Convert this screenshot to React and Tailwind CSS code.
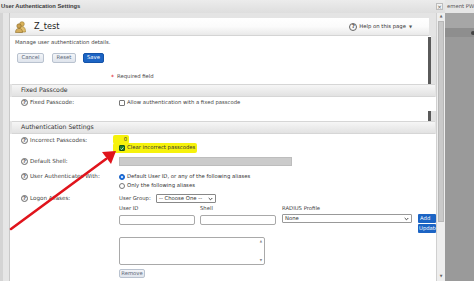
import React from "react";

const Help = () => (
  <span className="inline-flex items-center justify-center w-[7px] h-[7px] rounded-full border border-[#6b6b6b] bg-[#f4f4f4] text-[5px] font-bold text-[#555] leading-none shrink-0">?</span>
);

const Label = ({ children }) => (
  <div className="flex items-center gap-[2px] w-[98px] h-[9px] shrink-0">
    <Help />
    <span className="text-[5.6px] text-[#444] leading-none whitespace-nowrap">{children}</span>
  </div>
);

const SectionHeader = ({ children }) => (
  <div className="ml-[2px] w-[423px] h-[13px] flex items-center pl-[9px] bg-gradient-to-b from-[#f6f6f6] to-[#e2e2e2] border-y border-[#d6d6d6] shrink-0">
    <span className="text-[6.2px] text-[#333] leading-none">{children}</span>
  </div>
);

const GrayBtn = ({ children, w }) => (
  <div className={`${w} h-[10px] flex items-center justify-center rounded-[2px] border border-[#b9c2cf] bg-gradient-to-b from-[#f3f5f8] to-[#dfe4ec] text-[5.3px] text-[#5a6677] leading-none`}>
    {children}
  </div>
);

export default function App() {
  return (
    <div className="relative w-[474px] h-[281px] overflow-hidden flex bg-[#9b9b9b] font-['DejaVu_Sans',sans-serif]">
      {/* dialog */}
      <div className="w-[445px] flex flex-col shrink-0">
        {/* title bar */}
        <div className="h-[13px] bg-gradient-to-b from-[#ececec] to-[#dedede] flex items-center justify-between pl-[1px] pr-[2px] shrink-0">
          <span className="font-['Liberation_Sans',sans-serif] font-bold text-[5.8px] text-[#3a3a3a] leading-none">User Authentication Settings</span>
          <span className="w-[7px] h-[7px] border border-[#bdbdbd] bg-[#f3f3f3] flex items-center justify-center text-[6px] text-[#666] leading-none">×</span>
        </div>
        {/* body */}
        <div className="flex flex-1 min-h-0 bg-[#e4e4e4]">
          {/* left strip */}
          <div className="w-[10px] shrink-0 flex">
            <div className="w-[3px] bg-[#d4d4d4]" />
            <div className="w-[6px] bg-[#e6e6e6]" />
            <div className="w-[1px] bg-[#c9c9c9]" />
          </div>
          {/* content */}
          <div className="w-[426px] shrink-0 flex flex-col overflow-hidden pt-[5px]">
            {/* header panel */}
            <div className="w-[419px] h-[18px] shrink-0 flex items-center justify-between bg-gradient-to-b from-[#ffffff] via-[#fbfbfb] to-[#e9e9e9] border-b border-[#d4d4d4] pl-[5px] pr-[17px]">
              <div className="flex items-center gap-[8px]">
                <svg width="11" height="12" viewBox="0 0 11 12">
                  <circle cx="7" cy="3" r="2.3" fill="#d9b25a" stroke="#9c7a2c" strokeWidth="0.6" />
                  <path d="M3.5 11 C3.5 7 5 5.6 7 5.6 C9 5.6 10.5 7 10.5 11 Z" fill="#e2c070" stroke="#9c7a2c" strokeWidth="0.6" />
                  <circle cx="4" cy="5" r="2.2" fill="#caa050" stroke="#8a6a24" strokeWidth="0.6" />
                  <path d="M0.5 11.5 C0.5 8.5 2 7.4 4 7.4 C6 7.4 7.5 8.5 7.5 11.5 Z" fill="#d5ad5c" stroke="#8a6a24" strokeWidth="0.6" />
                </svg>
                <span className="text-[8.2px] text-[#222] leading-none">Z_test</span>
              </div>
              <div className="flex items-center gap-[1px]">
                <span className="inline-flex items-center justify-center w-[8px] h-[8px] rounded-full border border-[#666] text-[5.5px] font-bold text-[#555] leading-none">?</span>
                <span className="text-[5.3px] text-[#333] leading-none ml-[1px]">Help on this page</span>
                <span className="text-[4px] text-[#555] leading-none ml-[2px]">▼</span>
              </div>
            </div>
            {/* top block */}
            <div className="flex h-[48px] shrink-0 bg-white">
              <div className="w-[418px] flex flex-col">
                <div className="h-[8px] mt-[3px] pl-[5px] flex items-center text-[5.3px] text-[#444] leading-none">Manage user authentication details.</div>
                <div className="flex items-center mt-[6px] pl-[7px] gap-[8px]">
                  <GrayBtn w="w-[27px]">Cancel</GrayBtn>
                  <GrayBtn w="w-[24px]">Reset</GrayBtn>
                  <div className="w-[21px] h-[10px] -ml-[1px] flex items-center justify-center rounded-[2px] bg-[#1c64c4] border border-[#1553a8] text-[5.3px] text-white leading-none">Save</div>
                </div>
                <div className="h-[8px] mt-[10px] pl-[101px] flex items-center gap-[3px] leading-none">
                  <span className="text-[6px] text-[#d00] leading-none">*</span>
                  <span className="text-[5.3px] text-[#444]">Required field</span>
                </div>
              </div>
              <div className="w-[3px] mt-[1px] bg-[#5a5a5a]" />
              <div className="w-[5px] bg-[#e2e2e2]" />
            </div>
            <SectionHeader>Fixed Passcode</SectionHeader>
            <div className="flex h-[14px] shrink-0 bg-white">
              <div className="w-[418px] flex items-start pl-[11px] pt-[1px]">
                <Label>Fixed Passcode:</Label>
                <div className="flex items-center gap-[2px] h-[9px]">
                  <span className="w-[6px] h-[6px] border border-[#777] bg-white rounded-[1px]" />
                  <span className="text-[5.3px] text-[#444] leading-none whitespace-nowrap">Allow authentication with a fixed passcode</span>
                </div>
              </div>
            </div>
            <div className="flex h-[10px] shrink-0 bg-white">
              <div className="w-[418px]" />
              <div className="w-[3px] bg-[#5a5a5a]" />
              <div className="w-[5px] bg-[#e2e2e2]" />
            </div>
            <SectionHeader>Authentication Settings</SectionHeader>
            {/* auth rows */}
            <div className="flex-1 bg-white flex flex-col pl-[11px]">
              {/* incorrect passcodes */}
              <div className="flex h-[22px] shrink-0">
                <div className="mt-[2px]"><Label>Incorrect Passcodes:</Label></div>
                <div className="flex flex-col mt-[1px]">
                  <div className="-ml-[6px] w-[16px] h-[9px] bg-[#f6f20c] rounded-[2px] flex items-center justify-end pr-[2px]">
                    <span className="text-[5.3px] text-[#444] leading-none">0</span>
                  </div>
                  <div className="-ml-[6px] pl-[6px] pr-[2px] h-[10px] -mt-[1px] bg-[#f6f20c] rounded-[2px] flex items-center gap-[2px]">
                    <span className="w-[6px] h-[6px] bg-[#1d7d2a] border border-[#14541c] rounded-[1px] flex items-center justify-center">
                      <svg width="5" height="5" viewBox="0 0 5 5"><path d="M0.8 2.6 L2 3.8 L4.3 1.1" fill="none" stroke="#fff" strokeWidth="0.9" /></svg>
                    </span>
                    <span className="text-[5.3px] text-[#333] leading-none whitespace-nowrap">Clear incorrect passcodes</span>
                  </div>
                </div>
              </div>
              {/* default shell */}
              <div className="flex h-[11px] shrink-0 items-center">
                <Label>Default Shell:</Label>
                <div className="w-[173px] h-[9px] bg-[#cbcbcb] border border-[#bdbdbd]" />
              </div>
              {/* user authenticates with */}
              <div className="flex mt-[5px] shrink-0">
                <Label>User Authenticates With:</Label>
                <div className="flex flex-col">
                  <div className="h-[9px] flex items-center gap-[2px]">
                    <span className="w-[6px] h-[6px] rounded-full bg-[#1a73e8] border border-[#1a5fc0] flex items-center justify-center"><span className="w-[2px] h-[2px] rounded-full bg-white" /></span>
                    <span className="text-[5.3px] text-[#333] leading-none whitespace-nowrap">Default User ID, or any of the following aliases</span>
                  </div>
                  <div className="h-[9px] flex items-center gap-[2px]">
                    <span className="w-[6px] h-[6px] rounded-full bg-white border border-[#777]" />
                    <span className="text-[5.3px] text-[#333] leading-none whitespace-nowrap">Only the following aliases</span>
                  </div>
                </div>
              </div>
              {/* logon aliases */}
              <div className="flex mt-[4px] shrink-0">
                <Label>Logon Aliases:</Label>
                <div className="flex flex-col">
                  <div className="h-[9px] flex items-center">
                    <span className="w-[37px] text-[5.3px] text-[#444] leading-none">User Group:</span>
                    <div className="w-[60px] h-[9px] border border-[#888] rounded-[1px] bg-white flex items-center justify-between px-[2px]">
                      <span className="text-[5.3px] text-[#333] leading-none whitespace-nowrap">-- Choose One --</span>
                      <svg width="5" height="4" viewBox="0 0 5 4"><path d="M0.7 1 L2.5 2.8 L4.3 1" fill="none" stroke="#333" strokeWidth="0.9" /></svg>
                    </div>
                  </div>
                  <div className="h-[9px] mt-[1px] flex items-center text-[5.3px] text-[#444] leading-none">
                    <span className="w-[81px]">User ID</span>
                    <span className="w-[82px]">Shell</span>
                    <span>RADIUS Profile</span>
                  </div>
                  <div className="flex items-start mt-[1px]">
                    <div className="w-[76px] h-[10px] mt-[1px] border border-[#a9a9a9] rounded-[2px] bg-white" />
                    <div className="w-[76px] h-[10px] mt-[1px] ml-[5px] border border-[#a9a9a9] rounded-[2px] bg-white" />
                    <div className="w-[130px] h-[9px] ml-[6px] border border-[#999] rounded-[1px] bg-white flex items-center justify-between px-[2px]">
                      <span className="text-[5.3px] text-[#333] leading-none">None</span>
                      <svg width="5" height="4" viewBox="0 0 5 4"><path d="M0.7 1 L2.5 2.8 L4.3 1" fill="none" stroke="#333" strokeWidth="0.9" /></svg>
                    </div>
                    <div className="flex flex-col ml-[6px] gap-[1px]">
                      <div className="w-[18px] h-[9px] bg-[#1c64c4] rounded-[1px] flex items-center pl-[2px] text-[5.3px] text-white leading-none">Add</div>
                      <div className="w-[18px] h-[9px] bg-[#1c64c4] rounded-[1px] flex items-center pl-[1px] text-[5.3px] text-white leading-none">Update</div>
                    </div>
                  </div>
                  <div className="w-[146px] h-[28px] mt-[4px] border border-[#a9a9a9] rounded-[2px] bg-white flex justify-end">
                    <div className="w-[6px] flex flex-col justify-between items-center py-[2px] text-[3px] text-[#888] leading-none">
                      <span>▲</span>
                      <span>▼</span>
                    </div>
                  </div>
                  <div className="w-[26px] h-[9px] mt-[4px] rounded-[2px] border border-[#b9c2cf] bg-gradient-to-b from-[#f3f5f8] to-[#dfe4ec] flex items-center justify-center text-[5.3px] text-[#5a6677] leading-none">Remove</div>
                </div>
              </div>
            </div>
          </div>
          {/* scrollbar */}
          <div className="w-[9px] shrink-0 flex flex-col bg-[#eeeeee] border-l border-[#d0d0d0]">
            <div className="h-[8px] flex items-center justify-center text-[3.5px] text-[#666] leading-none">▲</div>
            <div className="h-[201px] mx-[1px] bg-[#c9c9c9] border border-[#b8b8b8]" />
            <div className="flex-1" />
            <div className="h-[8px] flex items-center justify-center text-[3.5px] text-[#666] leading-none">▼</div>
          </div>
        </div>
      </div>
      {/* right background */}
      <div className="flex-1 flex flex-col">
        <div className="h-[13px] bg-[#e6e6e6] flex items-center pl-[2px] overflow-hidden">
          <span className="text-[5.3px] text-[#555] leading-none whitespace-nowrap">ement  PW</span>
        </div>
        <div className="h-[15px] bg-[#a6a6a6]" />
        <div className="h-[9px] bg-[#8e8e8e] flex items-center justify-end">
          <span className="w-[4px] h-[4px] bg-[#444] rounded-full -mr-[1px]" />
        </div>
        <div className="flex-1 bg-[#9a9a9a]" />
      </div>
      {/* red arrow annotation */}
      <svg className="absolute left-0 top-0 pointer-events-none" width="474" height="281" viewBox="0 0 474 281">
        <line x1="11" y1="229" x2="106" y2="159" stroke="#e0141c" strokeWidth="2.6" strokeLinecap="round" />
        <polygon points="116,151 111,164 102,152" fill="#e0141c" />
      </svg>
    </div>
  );
}
